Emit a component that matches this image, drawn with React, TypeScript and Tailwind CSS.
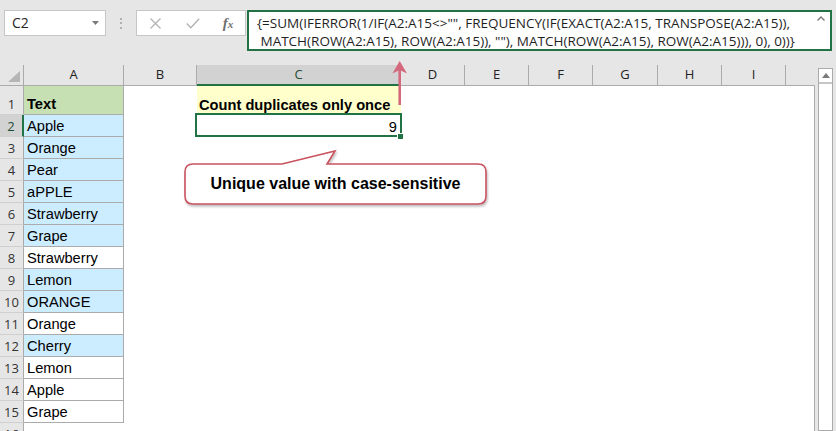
import React from 'react';

type Row = { n: number; a: string; kind: 'green' | 'blue' | 'white' | 'none' };

const rows: Row[] = [
  { n: 1, a: 'Text', kind: 'green' },
  { n: 2, a: 'Apple', kind: 'blue' },
  { n: 3, a: 'Orange', kind: 'blue' },
  { n: 4, a: 'Pear', kind: 'blue' },
  { n: 5, a: 'aPPLE', kind: 'blue' },
  { n: 6, a: 'Strawberry', kind: 'blue' },
  { n: 7, a: 'Grape', kind: 'blue' },
  { n: 8, a: 'Strawberry', kind: 'white' },
  { n: 9, a: 'Lemon', kind: 'blue' },
  { n: 10, a: 'ORANGE', kind: 'blue' },
  { n: 11, a: 'Orange', kind: 'white' },
  { n: 12, a: 'Cherry', kind: 'blue' },
  { n: 13, a: 'Lemon', kind: 'white' },
  { n: 14, a: 'Apple', kind: 'white' },
  { n: 15, a: 'Grape', kind: 'white' },
  { n: 16, a: '', kind: 'none' },
  { n: 17, a: '', kind: 'none' },
];

const cols = [
  { l: 'A', w: 'w-[100px]' },
  { l: 'B', w: 'w-[73px]' },
  { l: 'C', w: 'w-[204px]' },
  { l: 'D', w: 'w-[64px]' },
  { l: 'E', w: 'w-[64px]' },
  { l: 'F', w: 'w-[64px]' },
  { l: 'G', w: 'w-[65px]' },
  { l: 'H', w: 'w-[64px]' },
  { l: 'I', w: 'w-[64px]' },
];

function aClass(kind: Row['kind']) {
  if (kind === 'green') return 'bg-[#c6e0b4] border-r border-b border-[#ababab] font-bold';
  if (kind === 'blue') return 'bg-[#ccecff] border-r border-b border-[#ababab]';
  if (kind === 'white') return 'bg-white border-r border-b border-[#ababab]';
  return '';
}

export default function App() {
  return (
    <div className="relative w-[836px] h-[431px] overflow-hidden bg-[#e6e6e6] font-['Open_Sans',sans-serif]">
      {/* Toolbar */}
      <div className="flex items-start h-[65px] pt-[10px] pl-[4px]">
        <div className="w-[102px] h-[26px] bg-white border border-[#c6c6c6] flex items-center justify-between pl-[7px] pr-[6px]">
          <span className="text-[14px] leading-none text-[#262626]">C2</span>
          <svg width="7" height="4" viewBox="0 0 7 4">
            <path d="M0 0H7L3.5 4Z" fill="#7a7a7a" />
          </svg>
        </div>
        <div className="w-[30px] h-[26px] flex flex-col items-center justify-center gap-[2.5px]">
          <div className="w-[2px] h-[2px] rounded-full bg-[#a0a0a0]" />
          <div className="w-[2px] h-[2px] rounded-full bg-[#a0a0a0]" />
          <div className="w-[2px] h-[2px] rounded-full bg-[#a0a0a0]" />
        </div>
        <div className="w-[110px] h-[26px] bg-white border border-[#c6c6c6] flex items-center">
          <div className="w-[37px] flex justify-center">
            <svg width="11" height="11" viewBox="0 0 11 11">
              <path d="M0.5 0.5L10.5 10.5M10.5 0.5L0.5 10.5" stroke="#b3b3b3" strokeWidth="1.3" />
            </svg>
          </div>
          <div className="w-[37px] flex justify-center">
            <svg width="14" height="11" viewBox="0 0 14 11">
              <path d="M0.8 5.6L4.8 9.8L13.2 0.8" stroke="#b3b3b3" strokeWidth="1.4" fill="none" />
            </svg>
          </div>
          <div className="w-[34px] flex justify-center">
            <span className="italic font-bold font-['Liberation_Serif',serif] text-[15px] leading-none text-[#6f6f6f]">
              f<span className="text-[11px]">x</span>
            </span>
          </div>
        </div>
        <div className="ml-[1px] w-[585px] h-[41px] bg-white border-2 border-[#217346] flex">
          <div className="flex-1 pl-[8px] pt-[2px] text-[13.5px] leading-[18px] text-[#1f1f1f] whitespace-pre">
            <div>{'{=SUM(IFERROR(1/IF(A2:A15<>"", FREQUENCY(IF(EXACT(A2:A15, TRANSPOSE(A2:A15)),'}</div>
            <div>{' MATCH(ROW(A2:A15), ROW(A2:A15)), ""), MATCH(ROW(A2:A15), ROW(A2:A15))), 0), 0))}'}</div>
          </div>
          <div className="w-[18px] flex justify-center pt-[4px]">
            <svg width="8" height="5" viewBox="0 0 8 5">
              <path d="M0.5 4.5L4 1L7.5 4.5" stroke="#7a7a7a" strokeWidth="1.4" fill="none" />
            </svg>
          </div>
        </div>
      </div>

      {/* Sheet area */}
      <div className="flex h-[366px]">
        <div className="w-[815px] flex flex-col">
          {/* column headers */}
          <div className="flex h-[21px] shrink-0">
            <div className="w-[24px] shrink-0 border-r border-b border-[#ababab] flex items-end justify-end pr-[3px] pb-[3px]">
              <svg width="12" height="11" viewBox="0 0 12 11">
                <path d="M12 0V11H0Z" fill="#b5b5b5" />
              </svg>
            </div>
            {cols.map((c) =>
              c.l === 'C' ? (
                <div
                  key={c.l}
                  className={`${c.w} shrink-0 bg-[#d2d2d2] border-r border-r-[#ababab] border-b-2 border-b-[#217346] flex items-center justify-center text-[13px] text-[#1e4d33]`}
                >
                  {c.l}
                </div>
              ) : (
                <div
                  key={c.l}
                  className={`${c.w} shrink-0 border-r border-b border-[#ababab] flex items-center justify-center text-[13px] text-[#222]`}
                >
                  {c.l}
                </div>
              )
            )}
            <div className="flex-1 border-b border-[#ababab]" />
          </div>

          {/* body */}
          <div className="flex-1 bg-white border-r border-[#ababab] overflow-hidden flex flex-col">
            {rows.map((r) => (
              <div key={r.n} className={`flex shrink-0 ${r.n === 1 ? 'h-[29px]' : 'h-[22px]'}`}>
                <div
                  className={`w-[24px] shrink-0 border-b border-b-[#cfcfcf] flex items-end justify-center text-[13px] leading-[20px] ${
                    r.n === 2
                      ? 'bg-[#d2d2d2] text-[#1e4d33] border-r-2 border-r-[#217346]'
                      : 'bg-[#e6e6e6] text-[#333] border-r border-r-[#ababab]'
                  }`}
                >
                  {r.n}
                </div>
                <div
                  className={`w-[100px] shrink-0 flex items-end pl-[3px] font-['Liberation_Sans',Arial,sans-serif] text-[14.67px] leading-[20px] text-black ${aClass(r.kind)}`}
                >
                  {r.a}
                </div>
                <div className="w-[73px] shrink-0" />
                {r.n === 1 ? (
                  <div className="w-[204px] shrink-0 bg-[#ffffcc] flex items-end pl-[2px] font-['Liberation_Sans',Arial,sans-serif] font-bold text-[14.67px] leading-[20px] text-black">
                    Count duplicates only once
                  </div>
                ) : r.n === 2 ? (
                  <div className="relative w-[204px] shrink-0 flex items-end justify-end pr-[4px] font-['Liberation_Sans',Arial,sans-serif] text-[14.67px] leading-[20px] text-black">
                    9
                    <div className="absolute -top-[2px] -left-[2px] -right-[1px] bottom-0 border-2 border-[#217346]" />
                    <div className="absolute -right-[3px] -bottom-[3px] w-[7px] h-[7px] bg-[#217346] border border-white" />
                  </div>
                ) : (
                  <div className="w-[204px] shrink-0" />
                )}
                <div className="flex-1" />
              </div>
            ))}
          </div>
        </div>

        {/* vertical scrollbar */}
        <div className="ml-[3px] mt-[3px] w-[15px] h-[363px] bg-white border border-[#ababab] flex flex-col">
          <div className="h-[15px] border-b-2 border-[#c6c6c6] flex items-center justify-center">
            <svg width="8" height="5" viewBox="0 0 8 5">
              <path d="M0 5L4 0L8 5Z" fill="#7a7a7a" />
            </svg>
          </div>
        </div>
      </div>

      {/* Red arrow pointing to the formula bar */}
      <svg className="absolute left-[390px] top-[56px]" width="20" height="52" viewBox="0 0 20 52">
        <path d="M9.7 14V49" stroke="#d4687c" strokeWidth="2.6" />
        <path d="M9.7 5L17 17.5L9.7 14L2.4 17.5Z" fill="#d4687c" />
      </svg>

      {/* Callout */}
      <div className="absolute left-[180px] top-[145px] w-[315px] h-[66px]">
        <svg className="absolute inset-0" width="315" height="66" viewBox="0 0 315 66">
          <defs>
            <filter id="sh" x="-10%" y="-20%" width="120%" height="150%">
              <feDropShadow dx="1" dy="2" stdDeviation="1.2" floodColor="#000" floodOpacity="0.25" />
            </filter>
          </defs>
          <path
            d="M13 19 L102 19 L155 6 L147 19 L298 19 Q306 19 306 27 L306 51 Q306 59 298 59 L13 59 Q5 59 5 51 L5 27 Q5 19 13 19 Z"
            fill="#ffffff"
            stroke="#c9525f"
            strokeWidth="1.6"
            filter="url(#sh)"
          />
        </svg>
        <div className="absolute left-[5px] top-[19px] w-[301px] h-[40px] flex items-center justify-center font-['Liberation_Sans',Arial,sans-serif] font-bold text-[16px] text-black">
          Unique value with case-sensitive
        </div>
      </div>
    </div>
  );
}
